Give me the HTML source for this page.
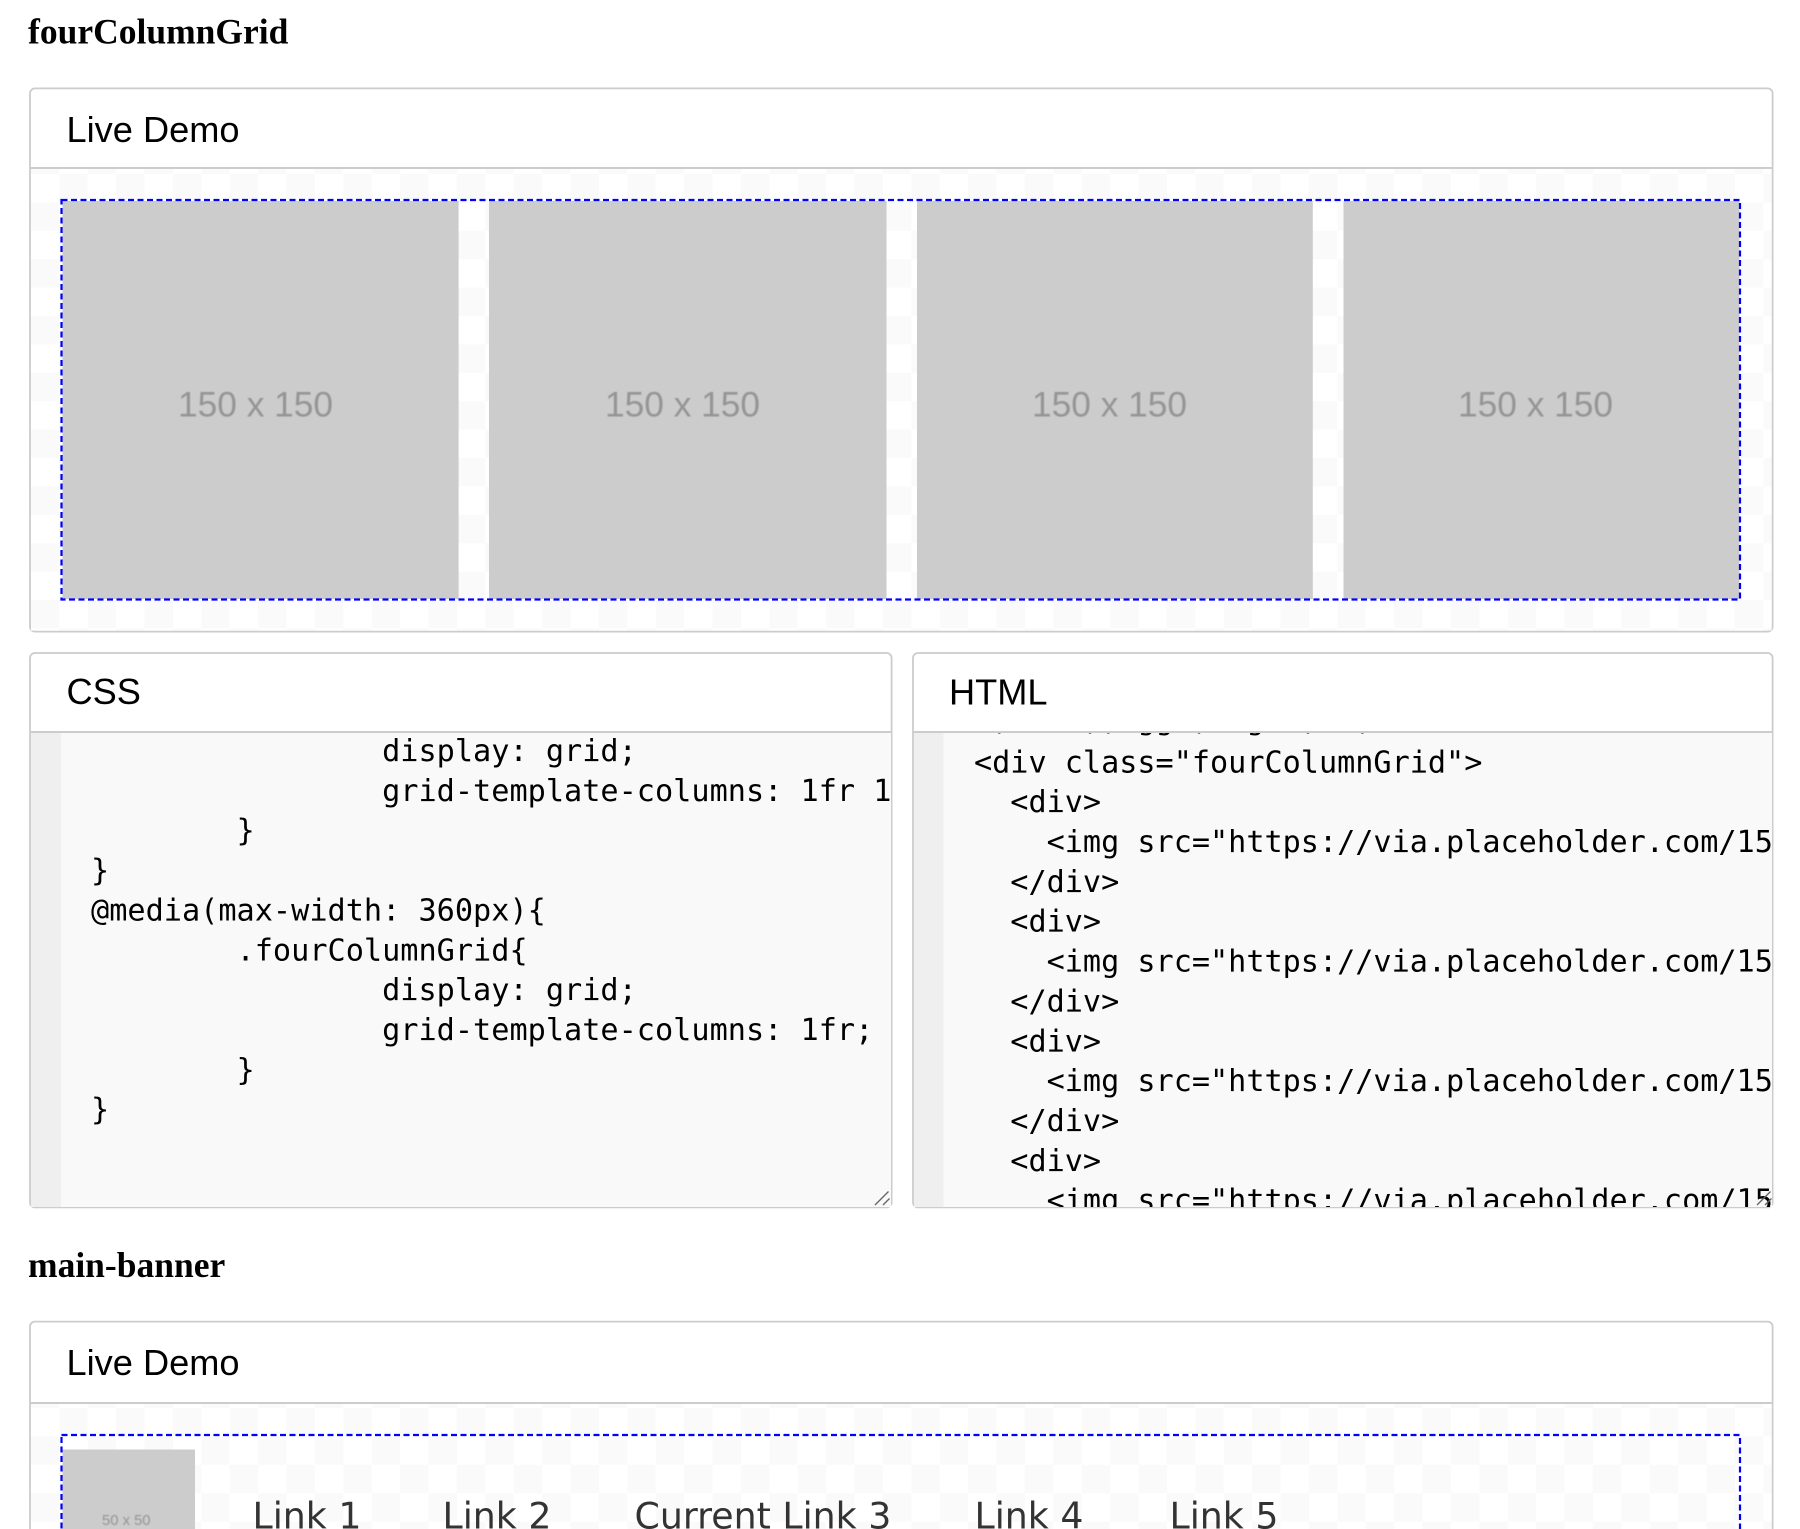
<!DOCTYPE html>
<html lang="en">
<head>
<meta charset="utf-8">
<title>fourColumnGrid</title>
<style>
html,body{margin:0;padding:0;background:#fff;width:1800px;height:1529px;overflow:hidden}
svg{display:block;filter:blur(.35px)}
text{white-space:pre}
.t{font:bold 35.5px "Liberation Serif",serif;fill:#000}
.h{font:36.2px "Liberation Sans",sans-serif;fill:#000}
.c{font:30.22px "DejaVu Sans Mono",monospace;fill:#000}
.d{font:30.17px "DejaVu Sans Mono",monospace;fill:#000}
.p{font:35.3px "Liberation Sans",sans-serif;fill:#959595;filter:blur(.6px)}
.s{font:14.8px "Liberation Sans",sans-serif;fill:#959595;filter:blur(.5px)}
.l{font:36.3px "DejaVu Sans",sans-serif;fill:#333}
</style>
</head>
<body>
<svg xmlns="http://www.w3.org/2000/svg" width="1800" height="1529" viewBox="0 0 1800 1529">
<defs>
<pattern id="ck1" patternUnits="userSpaceOnUse" x="59.3" y="174" width="56.8" height="56.8">
<rect width="56.8" height="56.8" fill="#fff"/><rect width="28.4" height="28.4" fill="#fafafa"/><rect x="28.4" y="28.4" width="28.4" height="28.4" fill="#fafafa"/>
</pattern>
<pattern id="ck2" patternUnits="userSpaceOnUse" x="59.3" y="1408" width="56.8" height="56.8">
<rect width="56.8" height="56.8" fill="#fff"/><rect width="28.4" height="28.4" fill="#fafafa"/><rect x="28.4" y="28.4" width="28.4" height="28.4" fill="#fafafa"/>
</pattern>
<clipPath id="cssclip"><rect x="31" y="733" width="860" height="474"/></clipPath>
<clipPath id="htmlclip"><rect x="914" y="733" width="858" height="474"/></clipPath>
</defs>

<rect width="1800" height="1529" fill="#fff"/>

<text class="t" x="28" y="43.5">fourColumnGrid</text>

<!-- Live demo 1 -->
<rect x="30" y="88.4" width="1742.6" height="543.2" rx="5" fill="#fff" stroke="#ccc" stroke-width="1.8"/>
<rect x="31" y="169" width="1740.6" height="461.5" fill="url(#ck1)"/>
<rect x="30" y="167" width="1742.6" height="2" fill="#ccc"/>
<text class="h" x="66.5" y="142">Live Demo</text>
<rect x="62.5" y="201" width="396.1" height="398" fill="#ccc"/>
<rect x="489" y="201" width="397.5" height="398" fill="#ccc"/>
<rect x="917" y="201" width="395.8" height="398" fill="#ccc"/>
<rect x="1343.5" y="201" width="396" height="398" fill="#ccc"/>
<text class="p" x="178" y="416.5">150 x 150</text>
<text class="p" x="605" y="416.5">150 x 150</text>
<text class="p" x="1032" y="416.5">150 x 150</text>
<text class="p" x="1458" y="416.5">150 x 150</text>
<rect x="61.5" y="200" width="1678.5" height="399.5" fill="none" stroke="#00f" stroke-width="2.2" stroke-dasharray="6 3.5"/>

<!-- CSS card -->
<rect x="30" y="653" width="861.6" height="554.4" rx="5" fill="#fff" stroke="#ccc" stroke-width="1.8"/>
<rect x="31" y="733" width="860" height="474" fill="#f9f9f9"/>
<rect x="31" y="733" width="30" height="474" fill="#efefef"/>
<rect x="30" y="731" width="861.6" height="2" fill="#ccc"/>
<text class="h" x="66.5" y="704">CSS</text>
<g clip-path="url(#cssclip)">
<text class="c" x="91" y="761">                display: grid;</text>
<text class="c" x="91" y="800.85">                grid-template-columns: 1fr 1fr;</text>
<text class="c" x="91" y="840.7">        }</text>
<text class="c" x="91" y="880.55">}</text>
<text class="c" x="91" y="920.4">@media(max-width: 360px){</text>
<text class="c" x="91" y="960.25">        .fourColumnGrid{</text>
<text class="c" x="91" y="1000.1">                display: grid;</text>
<text class="c" x="91" y="1039.95">                grid-template-columns: 1fr;</text>
<text class="c" x="91" y="1079.8">        }</text>
<text class="c" x="91" y="1119.65">}</text>
</g>
<path d="M875 1205L888.5 1191.5M883 1205L889.5 1198.5" stroke="#666" stroke-width="1.4" fill="none"/>

<!-- HTML card -->
<rect x="913" y="653" width="859.6" height="554.4" rx="5" fill="#fff" stroke="#ccc" stroke-width="1.8"/>
<rect x="914" y="733" width="858" height="474" fill="#f9f9f9"/>
<rect x="914" y="733" width="29.5" height="474" fill="#efefef"/>
<g clip-path="url(#htmlclip)">
<text class="d" x="974" y="729"> ,    ,, gg ,  g  ,  ,</text>
<text class="d" x="974" y="772.3">&lt;div class="fourColumnGrid"&gt;</text>
<text class="d" x="974" y="812.15">  &lt;div&gt;</text>
<text class="d" x="974" y="852">    &lt;img src="https://via.placeholder.com/150"&gt;</text>
<text class="d" x="974" y="891.85">  &lt;/div&gt;</text>
<text class="d" x="974" y="931.7">  &lt;div&gt;</text>
<text class="d" x="974" y="971.55">    &lt;img src="https://via.placeholder.com/150"&gt;</text>
<text class="d" x="974" y="1011.4">  &lt;/div&gt;</text>
<text class="d" x="974" y="1051.25">  &lt;div&gt;</text>
<text class="d" x="974" y="1091.1">    &lt;img src="https://via.placeholder.com/150"&gt;</text>
<text class="d" x="974" y="1130.95">  &lt;/div&gt;</text>
<text class="d" x="974" y="1170.8">  &lt;div&gt;</text>
<text class="d" x="974" y="1210.65">    &lt;img src="https://via.placeholder.com/150"&gt;</text>
</g>
<rect x="913" y="731" width="859.6" height="2" fill="#ccc"/>
<text class="h" x="949" y="704.5">HTML</text>
<path d="M1757 1205L1770.5 1191.5M1765 1205L1771.5 1198.5" stroke="#666" stroke-width="1.4" fill="none"/>

<text class="t" x="28" y="1277">main-banner</text>

<!-- Live demo 2 -->
<rect x="30" y="1321.6" width="1742.6" height="260" rx="5" fill="#fff" stroke="#ccc" stroke-width="1.8"/>
<rect x="31" y="1404" width="1740.6" height="170" fill="url(#ck2)"/>
<rect x="30" y="1402" width="1742.6" height="2" fill="#ccc"/>
<text class="h" x="66.5" y="1375">Live Demo</text>
<rect x="62.5" y="1449.5" width="132.5" height="90" fill="#ccc"/>
<text class="s" x="102" y="1525">50 x 50</text>
<text class="l" x="252.5" y="1528.5">Link 1</text>
<text class="l" x="442.5" y="1528.5">Link 2</text>
<text class="l" x="634.5" y="1528.5">Current Link 3</text>
<text class="l" x="974.5" y="1528.5">Link 4</text>
<text class="l" x="1169.5" y="1528.5">Link 5</text>
<rect x="61.5" y="1435" width="1678.5" height="140" fill="none" stroke="#00f" stroke-width="2.2" stroke-dasharray="6 3.5"/>
</svg>
</body>
</html>
